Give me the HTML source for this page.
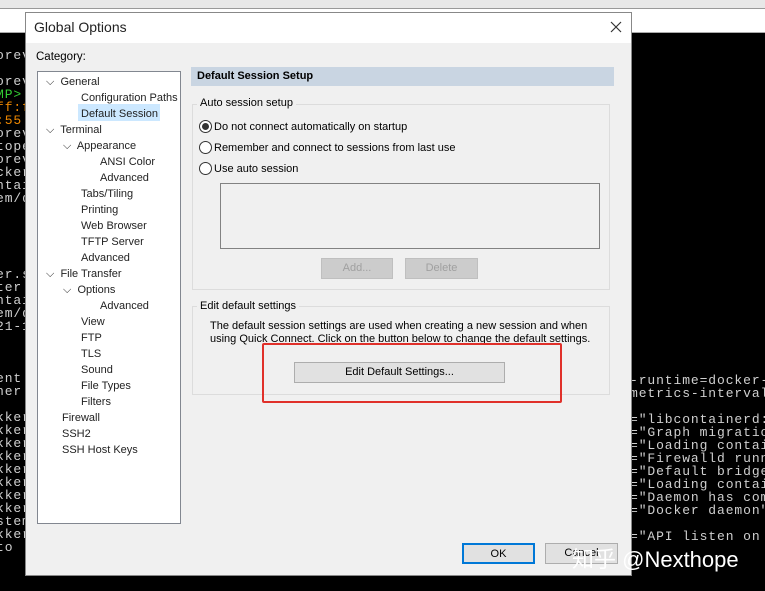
<!DOCTYPE html>
<html><head><meta charset="utf-8"><style>
*{margin:0;padding:0;box-sizing:border-box}
body{width:765px;height:591px;background:#000;position:relative;overflow:hidden;font-family:"Liberation Sans",sans-serif;font-size:11px;color:#000}
.a{position:absolute;white-space:nowrap}
.t{font-family:"Liberation Mono",monospace;font-size:13px;letter-spacing:0.9px;color:#cfcfcf;line-height:13px}
.btn{position:absolute;background:#e1e1e1;border:1px solid #adadad;text-align:center;font-size:11px;line-height:19px}
.dis{color:#a0a0a0;background:#ccc;border-color:#bfbfbf}
.rad{position:absolute;width:13px;height:13px;border:1px solid #333;border-radius:50%;background:#fff}
</style></head><body>
<div class="a" style="left:0;top:0;width:765px;height:8px;background:#e8e8e8"></div>
<div class="a" style="left:0;top:8px;width:765px;height:1px;background:#999"></div>
<div class="a" style="left:0;top:9px;width:765px;height:23px;background:#fff"></div>
<div class="a" style="left:0;top:32px;width:765px;height:1px;background:#aaa"></div>
<div class="a t" style="left:-4px;top:49px">orev<br><br>orev<br><span style="color:#3c3">MP&gt;</span><br><span style="color:#e80">ff:f</span><br><span style="color:#e80">:55</span><br>orev<br>tope<br>orev<br>cker.<br>ntai<br>em/d</div>
<div class="a t" style="left:-4px;top:268px">er.s<br>ter.<br>ntai<br>em/d<br>21-1<br><br><br><br>ent<br>ner<br><br>kker<br>kker<br>kker<br>kker<br>kker<br>kker<br>kker<br>kker<br>stem<br>kker<br>to</div>
<div class="a t" style="left:630px;top:374px">-runtime=docker-ru<br>metrics-interval=0<br><br>="libcontainerd: m<br>="Graph migration<br>="Loading containe<br>="Firewalld runnin<br>="Default bridge c<br>="Loading containe<br>="Daemon has comp<br>="Docker daemon" c<br><br>="API listen on /v</div>
<!-- dialog -->
<div class="a" style="left:25px;top:12px;width:607px;height:564px;background:#f0f0f0;border:1px solid #888"></div>
<div class="a" style="left:26px;top:13px;width:605px;height:30px;background:#fff"></div>
<div class="a" style="left:34px;top:19px;font-size:14px;color:#222">Global Options</div>
<svg class="a" style="left:610px;top:21px" width="12" height="12"><path d="M1 1L11 11M11 1L1 11" stroke="#333" stroke-width="1.2"/></svg>
<div class="a" style="left:36px;top:51px;font-size:11.5px">Category:</div>
<div class="a" style="left:37px;top:71px;width:144px;height:453px;background:#fff;border:1px solid #828790"></div>
<div class="a" style="left:78px;top:104px;width:82px;height:17px;background:#cce8ff"></div>
<div class="a" style="left:46px;top:74px;font-size:11px;line-height:16px;color:#222">
<div>⌵&nbsp; General</div>
<div style="padding-left:35px">Configuration Paths</div>
<div style="padding-left:35px">Default Session</div>
<div>⌵&nbsp; Terminal</div>
<div style="padding-left:17px">⌵&nbsp; Appearance</div>
<div style="padding-left:54px">ANSI Color</div>
<div style="padding-left:54px">Advanced</div>
<div style="padding-left:35px">Tabs/Tiling</div>
<div style="padding-left:35px">Printing</div>
<div style="padding-left:35px">Web Browser</div>
<div style="padding-left:35px">TFTP Server</div>
<div style="padding-left:35px">Advanced</div>
<div>⌵&nbsp; File Transfer</div>
<div style="padding-left:17px">⌵&nbsp; Options</div>
<div style="padding-left:54px">Advanced</div>
<div style="padding-left:35px">View</div>
<div style="padding-left:35px">FTP</div>
<div style="padding-left:35px">TLS</div>
<div style="padding-left:35px">Sound</div>
<div style="padding-left:35px">File Types</div>
<div style="padding-left:35px">Filters</div>
<div style="padding-left:16px">Firewall</div>
<div style="padding-left:16px">SSH2</div>
<div style="padding-left:16px">SSH Host Keys</div>
</div>
<div class="a" style="left:191px;top:67px;width:423px;height:19px;background:#c9d5e2"></div>
<div class="a" style="left:197px;top:70px;font-weight:bold;font-size:11px">Default Session Setup</div>
<div class="a" style="left:192px;top:104px;width:418px;height:186px;border:1px solid #dcdcdc"></div>
<div class="a" style="left:197px;top:97px;background:#f0f0f0;padding:0 3px;font-size:11px">Auto session setup</div>
<div class="rad" style="left:199px;top:120px"></div><div class="a" style="left:202px;top:123px;width:7px;height:7px;border-radius:50%;background:#333"></div>
<div class="a" style="left:214px;top:121px">Do not connect automatically on startup</div>
<div class="rad" style="left:199px;top:141px"></div><div class="a" style="left:214px;top:142px">Remember and connect to sessions from last use</div>
<div class="rad" style="left:199px;top:162px"></div><div class="a" style="left:214px;top:163px">Use auto session</div>
<div class="a" style="left:220px;top:183px;width:380px;height:66px;border:1px solid #828282"></div>
<div class="btn dis" style="left:321px;top:258px;width:72px;height:21px">Add...</div>
<div class="btn dis" style="left:405px;top:258px;width:73px;height:21px">Delete</div>
<div class="a" style="left:192px;top:306px;width:418px;height:89px;border:1px solid #dcdcdc"></div>
<div class="a" style="left:197px;top:300px;background:#f0f0f0;padding:0 3px">Edit default settings</div>
<div class="a" style="left:210px;top:320px;line-height:13px">The default session settings are used when creating a new session and when<br>using Quick Connect.  Click on the button below to change the default settings.</div>
<div class="btn" style="left:294px;top:362px;width:211px;height:21px">Edit Default Settings...</div>
<div class="a" style="left:262px;top:343px;width:300px;height:60px;border:2px solid #e0302a;border-radius:2px"></div>
<div class="btn" style="left:462px;top:543px;width:73px;height:21px;border:2px solid #0078d7">OK</div>
<div class="btn" style="left:545px;top:543px;width:73px;height:21px">Cancel</div>
<div class="a" style="left:572px;top:542px;font-size:22px;color:#fff;font-family:'Liberation Sans','Noto Sans CJK SC',sans-serif">知乎 @Nexthope</div>
</body></html>
